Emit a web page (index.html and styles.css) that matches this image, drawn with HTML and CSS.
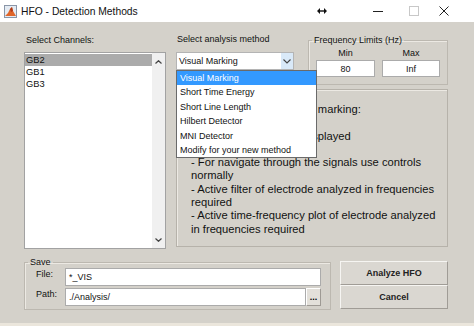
FILE: index.html
```html
<!DOCTYPE html>
<html lang="en">
<head>
    <meta charset="UTF-8">
    <meta name="viewport" content="width=device-width, initial-scale=1.0">
    <title>HFO - Detection Methods</title>
    <link rel="stylesheet" href="styles.css">
</head>
<body>
    <div class="window">
        <div class="titlebar">
            <svg class="app-icon" width="13" height="13" viewBox="0 0 13 13">
                <rect x="0.5" y="0.5" width="12" height="12" fill="#e4ebf3" stroke="#8a96a8"/>
                <polygon points="1,11 4,8 6,4 8,2 9,6 12,11" fill="#e0662a"/>
                <polygon points="6,4 8,2 9,6 7,7" fill="#b03a18"/>
            </svg>
            <span class="title">HFO - Detection Methods</span>
            <div class="controls">
                <span class="ctl ctl-dock">
                    <svg width="10" height="6" viewBox="0 0 10 6"><path d="M0 3 L3 0 V6 Z M10 3 L7 0 V6 Z" fill="#111"/><rect x="2" y="2.3" width="6" height="1.4" fill="#111"/></svg>
                </span>
                <span class="ctl ctl-min">
                    <svg width="10" height="10" viewBox="0 0 10 10"><path d="M0 5.5 H10" stroke="#222" stroke-width="1"/></svg>
                </span>
                <span class="ctl ctl-max">
                    <svg width="10" height="10" viewBox="0 0 10 10"><rect x="0.5" y="0.5" width="9" height="9" fill="none" stroke="#c8c8c8"/></svg>
                </span>
                <span class="ctl ctl-close">
                    <svg width="10" height="10" viewBox="0 0 10 10"><path d="M0.5 0.5 L9.5 9.5 M9.5 0.5 L0.5 9.5" stroke="#222" stroke-width="1"/></svg>
                </span>
            </div>
        </div>

        <div class="content">
            <div class="top">
                <div class="channels">
                    <div class="label">Select Channels:</div>
                    <div class="listbox">
                        <div class="items">
                            <div class="item selected">GB2</div>
                            <div class="item">GB1</div>
                            <div class="item">GB3</div>
                        </div>
                        <div class="scrollbar">
                            <svg width="7" height="4" viewBox="0 0 7 4"><path d="M0.5 3.5 L3.5 0.7 L6.5 3.5" fill="none" stroke="#444" stroke-width="1.2"/></svg>
                            <svg width="7" height="4" viewBox="0 0 7 4"><path d="M0.5 0.5 L3.5 3.3 L6.5 0.5" fill="none" stroke="#444" stroke-width="1.2"/></svg>
                        </div>
                    </div>
                </div>

                <div class="right">
                    <div class="right-top">
                        <div class="method">
                            <div class="label">Select analysis method</div>
                            <div class="select">
                                <span class="select-value">Visual Marking</span>
                                <span class="select-arrow">
                                    <svg width="8" height="5" viewBox="0 0 8 5"><path d="M0.5 0.5 L4 4 L7.5 0.5" fill="none" stroke="#444" stroke-width="1.1"/></svg>
                                </span>
                                <ul class="options">
                                    <li class="active">Visual Marking</li>
                                    <li>Short Time Energy</li>
                                    <li>Short Line Length</li>
                                    <li>Hilbert Detector</li>
                                    <li>MNI Detector</li>
                                    <li>Modify for your new method</li>
                                </ul>
                            </div>
                        </div>

                        <fieldset class="freq">
                            <legend>Frequency Limits (Hz)</legend>
                            <div class="freq-grid">
                                <span class="freq-label">Min</span>
                                <span class="freq-label">Max</span>
                                <div class="field center">80</div>
                                <div class="field center">Inf</div>
                            </div>
                        </fieldset>
                    </div>

                    <div class="panel">
                        <p>Instructions for the visual marking:</p>
                        <p>&nbsp;</p>
                        <p>- All the signals will be displayed</p>
                        <p>&nbsp;</p>
                        <p>- For navigate through the signals use controls normally</p>
                        <p>- Active filter of electrode analyzed in frequencies required</p>
                        <p>- Active time-frequency plot of electrode analyzed in frequencies required</p>
                    </div>
                </div>
            </div>

            <div class="bottom">
                <fieldset class="save">
                    <legend>Save</legend>
                    <div class="save-row">
                        <span class="save-label">File:</span>
                        <div class="field wide">*_VIS</div>
                    </div>
                    <div class="save-row">
                        <span class="save-label">Path:</span>
                        <div class="field wide">./Analysis/</div>
                        <button class="browse">...</button>
                    </div>
                </fieldset>

                <div class="actions">
                    <button class="action">Analyze HFO</button>
                    <button class="action">Cancel</button>
                </div>
            </div>
        </div>
    </div>
</body>
</html>
```

FILE: styles.css
```css
* {
    box-sizing: border-box;
}
body {
    margin: 0;
    font-family: "Liberation Sans", Arial, sans-serif;
    font-size: 9px;
    color: #111;
}
.window {
    width: 474px;
    height: 326px;
    background-color: #d4d1ca;
    border-bottom: 3px solid #ebe6dc;
    overflow: hidden;
}
.titlebar {
    height: 22px;
    background-color: #fff;
    display: flex;
    align-items: center;
    padding-left: 4px;
}
.app-icon {
    display: block;
    margin-top: 1px;
}
.title {
    font-size: 10.3px;
    margin-left: 4px;
    color: #111;
}
.controls {
    margin-left: auto;
    display: flex;
    align-items: center;
    padding-right: 15px;
}
.ctl {
    width: 30px;
    height: 22px;
    display: flex;
    align-items: center;
    justify-content: center;
}
.ctl-dock {
    margin-right: 26px;
}
.ctl-min {
    margin-right: 6px;
}

.content {
    padding: 11px 26px 0 24px;
}
.top {
    display: flex;
}
.label {
    line-height: 14px;
    height: 14px;
    margin-bottom: 5px;
    padding-left: 2px;
}
.channels {
    width: 142px;
}
.listbox {
    height: 197px;
    background-color: #fff;
    border: 1px solid #a2a2a2;
    display: flex;
}
.items {
    flex: 1;
    padding-top: 1px;
}
.item {
    height: 12px;
    line-height: 12px;
    padding-left: 1px;
    font-size: 9.3px;
}
.item.selected {
    background-color: #ababab;
}
.scrollbar {
    width: 13px;
    background-color: #f0f0f0;
    display: flex;
    flex-direction: column;
    justify-content: space-between;
    align-items: center;
    padding: 7px 0 6px;
}
.scrollbar svg {
    display: block;
}

.right {
    width: 272px;
    margin-left: 10px;
}
.right-top {
    display: flex;
}
.method {
    width: 132px;
}
.method .label {
    padding-left: 1px;
    margin-top: -1px;
    margin-bottom: 6px;
}
.select {
    position: relative;
    width: 118px;
    height: 18px;
    background-color: #fff;
    border: 1px solid #b4b4b4;
    display: flex;
    align-items: center;
}
.select-value {
    flex: 1;
    padding-left: 2px;
}
.select-arrow {
    width: 12px;
    height: 16px;
    background-color: #d9e9f8;
    display: flex;
    align-items: center;
    justify-content: center;
}
.options {
    position: absolute;
    top: 17px;
    left: -1px;
    width: 141px;
    margin: 0;
    padding: 0;
    list-style: none;
    background-color: #fff;
    border: 1px solid #6a6a6a;
    z-index: 2;
}
.options li {
    height: 14.4px;
    line-height: 14.4px;
    padding-left: 3px;
}
.options li.active {
    background-color: #3399ff;
    color: #fff;
}

fieldset {
    margin: 0;
    border: 1px solid #bcb8b0;
    box-shadow: inset 1px 1px 0 #ece9e3;
}
legend {
    padding: 0 2px;
}
.freq {
    width: 140px;
    height: 52px;
    padding: 0 6px 6px 7px;
}
.freq legend {
    line-height: 14px;
    margin-left: -4px;
}
.freq-grid {
    display: grid;
    grid-template-columns: 59px 58px;
    column-gap: 7px;
}
.freq-label {
    text-align: center;
    line-height: 13px;
}
.field {
    height: 17px;
    line-height: 16px;
    background-color: #fff;
    border: 1px solid #ababab;
    padding-left: 3px;
}
.field.center {
    text-align: center;
    padding-left: 0;
}

.panel {
    margin-top: 4px;
    height: 158px;
    border: 1px solid #b6b2aa;
    box-shadow: inset 1px 1px 0 #ece9e3;
    padding: 13px 6px 0 14px;
    font-size: 11.2px;
    line-height: 13.3px;
}
.panel p {
    margin: 0;
}

.bottom {
    display: flex;
    margin-top: 7px;
}
.save {
    width: 307px;
    height: 54px;
    padding: 0 9px 2px 11px;
}
.save legend {
    line-height: 12px;
    margin-left: -8px;
}
.save-row {
    display: flex;
    height: 18px;
}
.save-row + .save-row {
    margin-top: 2px;
}
.save-label {
    width: 29px;
    line-height: 12px;
}
.field.wide {
    flex: 1;
    height: 18px;
    line-height: 17px;
}
.browse {
    width: 15px;
    height: 18px;
    padding: 0;
    background-color: #e3e0da;
    border: 1px solid #9e9a94;
    border-top-color: #fff;
    border-left-color: #fff;
    font-family: inherit;
    font-size: 9px;
    font-weight: bold;
    line-height: 12px;
}

.actions {
    margin-left: 9px;
    margin-top: 5px;
    width: 108px;
    display: flex;
    flex-direction: column;
}
.action {
    height: 24px;
    padding: 0;
    background-color: #dad7d1;
    border: 1px solid #a09c96;
    border-top-color: #f6f5f2;
    border-left-color: #f6f5f2;
    font-family: inherit;
    font-size: 9px;
    font-weight: bold;
    color: #222;
}
```
